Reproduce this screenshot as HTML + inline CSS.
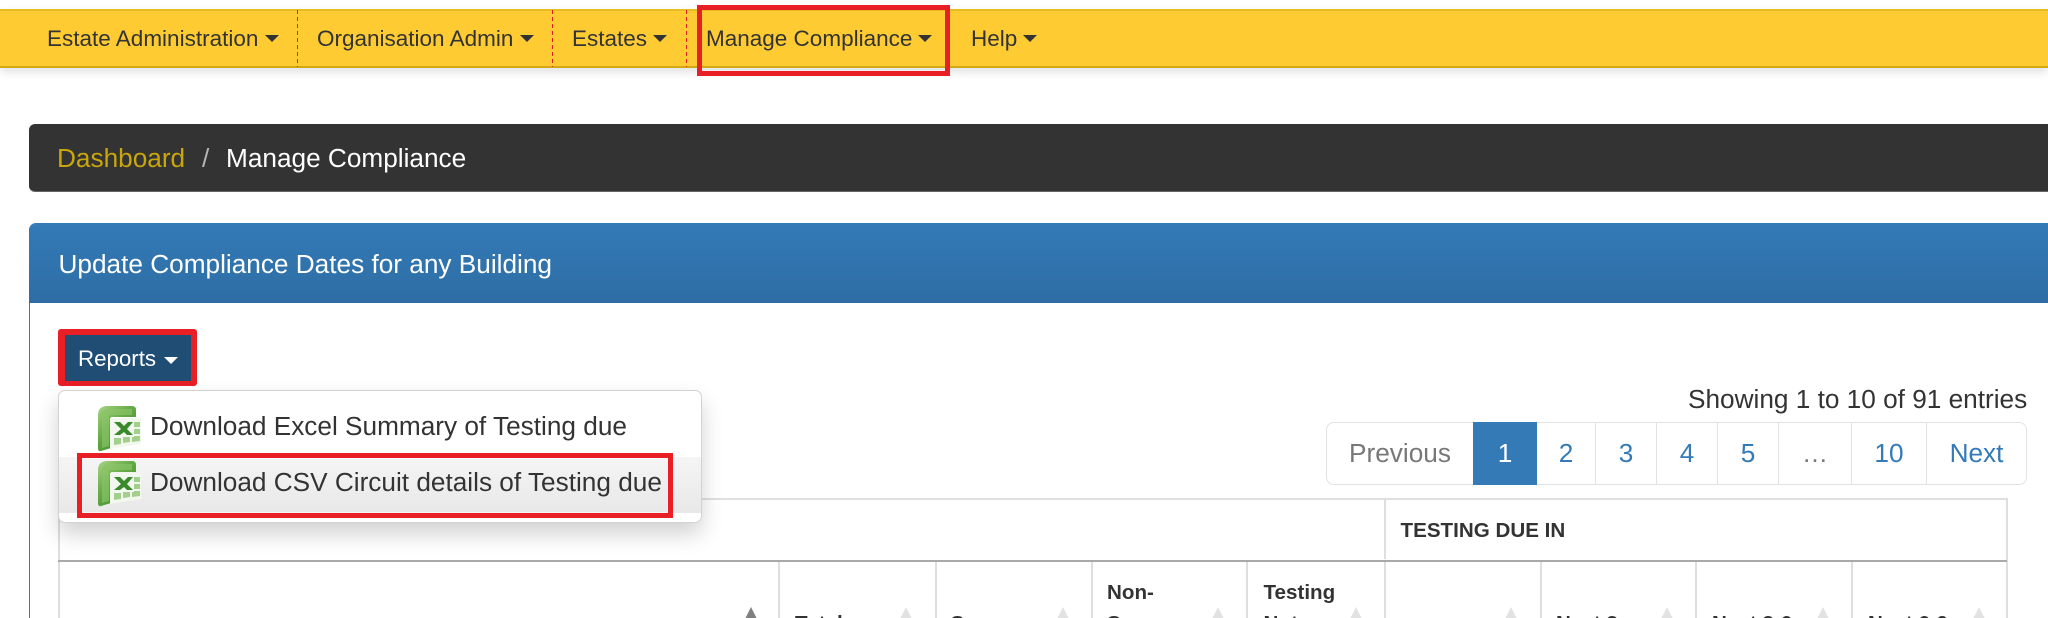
<!DOCTYPE html>
<html><head><meta charset="utf-8"><title>Manage Compliance</title>
<style>
html,body{margin:0;padding:0;background:#fff;overflow:hidden}
#s{position:relative;width:2048px;height:618px;overflow:hidden;background:#fff;font-family:"Liberation Sans",Arial,sans-serif;color:#333;filter:blur(.35px)}
#s div,#s span.t,#s svg{position:absolute}
.t{white-space:nowrap;font-size:26.2px;line-height:26.2px;height:26.2px}
.n{font-size:22.5px;line-height:22.5px;top:28px;height:22.5px;color:#333}
.c{width:0;height:0;border-left:7px solid transparent;border-right:7px solid transparent;border-top:7.5px solid #333;top:35px}
.sep{top:10px;height:57px;width:1px;background:repeating-linear-gradient(#e0201b 0 4px,transparent 4px 7px)}
.red{border:5.5px solid #e81f25;box-sizing:border-box}
.pg{top:422px;height:63px;font-size:26.2px;text-align:center;color:#337ab7;box-sizing:border-box;border-top:1.5px solid #e2e2e2;border-bottom:1.5px solid #e2e2e2;border-right:1.5px solid #e2e2e2;line-height:60px}
.v{width:1.5px;background:#dedede;top:562px;height:56px}
.h{font-weight:bold;font-size:20.6px;line-height:20.6px;height:20.6px;color:#333}
.a{width:0;height:0;border-left:11px solid transparent;border-right:11px solid transparent;border-bottom:22px solid #e2e2e2;top:607px}
</style></head><body><div id="s">

<!-- nav -->
<div style="left:0;top:9px;width:2048px;height:59px;background:#ffcb33;border-top:2px solid #e6bc22;border-bottom:2px solid #d2ab14;box-sizing:border-box;box-shadow:0 4px 9px rgba(0,0,0,.12)"></div>
<span class="t n" style="left:47px">Estate Administration</span><div class="c" style="left:265px"></div>
<div class="sep" style="left:297px"></div>
<span class="t n" style="left:317px">Organisation Admin</span><div class="c" style="left:520px"></div>
<div class="sep" style="left:552px"></div>
<span class="t n" style="left:572px">Estates</span><div class="c" style="left:653px"></div>
<div class="sep" style="left:686px"></div>
<span class="t n" style="left:706px">Manage Compliance</span><div class="c" style="left:918px"></div>
<span class="t n" style="left:971px">Help</span><div class="c" style="left:1023px"></div>
<div class="red" style="left:697px;top:5px;width:253px;height:71px"></div>

<!-- breadcrumb -->
<div style="left:29px;top:124px;width:2100px;height:68px;background:#333;border-radius:6px;border-bottom:1px solid #666;box-sizing:border-box"></div>
<span class="t" style="left:57px;top:145px;color:#c9a60b">Dashboard</span>
<span class="t" style="left:202px;top:145px;color:#b5b5b5">/</span>
<span class="t" style="left:226px;top:145px;color:#fff">Manage Compliance</span>

<!-- panel -->
<div style="left:29px;top:223px;width:2100px;height:500px;border:1.5px solid #337ab7;box-sizing:border-box;border-radius:7px"></div>
<div style="left:29px;top:224px;width:2100px;height:79px;background:linear-gradient(#337ab7,#2e6da4);border-radius:7px 7px 0 0"></div>
<span class="t" style="left:58.5px;top:251px;color:#fff">Update Compliance Dates for any Building</span>

<!-- table -->
<div style="left:59px;top:498px;width:1948px;height:1.5px;background:#e0e0e0"></div>
<div style="left:58px;top:498px;width:1.5px;height:120px;background:#dedede"></div>
<div style="left:2006px;top:498px;width:1.5px;height:120px;background:#dedede"></div>
<div style="left:58px;top:559.5px;width:1949px;height:2.5px;background:#a9a9a9"></div>
<div style="left:1384px;top:498px;width:1.5px;height:61px;background:#dedede"></div>
<div class="v" style="left:778px"></div><div class="v" style="left:935px"></div><div class="v" style="left:1091px"></div><div class="v" style="left:1246px"></div><div class="v" style="left:1384px"></div><div class="v" style="left:1540px"></div><div class="v" style="left:1695px"></div><div class="v" style="left:1851px"></div>
<span class="t h" style="left:1400.5px;top:520.5px">TESTING DUE IN</span>
<span class="t h" style="left:795px;top:613.5px">Total</span>
<span class="t h" style="left:950.5px;top:613.5px">Spare</span>
<span class="t h" style="left:1107px;top:583px">Non-</span>
<span class="t h" style="left:1107px;top:613.5px">Spare</span>
<span class="t h" style="left:1263.5px;top:583px">Testing</span>
<span class="t h" style="left:1263.5px;top:613.5px">Not</span>
<span class="t h" style="left:1556px;top:613.5px">Next 3</span>
<span class="t h" style="left:1712px;top:613.5px">Next 3-6</span>
<span class="t h" style="left:1868px;top:613.5px">Next 6-9</span>
<div class="a" style="left:740px;border-bottom-color:#808080"></div>
<div class="a" style="left:895px"></div><div class="a" style="left:1052px"></div><div class="a" style="left:1207px"></div><div class="a" style="left:1345px"></div><div class="a" style="left:1500px"></div><div class="a" style="left:1656px"></div><div class="a" style="left:1812px"></div><div class="a" style="left:1968px"></div>

<!-- showing + pagination -->
<span class="t" style="left:1688px;top:386px">Showing 1 to 10 of 91 entries</span>
<div class="pg" style="left:1326px;width:147px;border-left:1.5px solid #e2e2e2;border-right:0;border-radius:8px 0 0 8px;color:#777">Previous</div>
<div class="pg" style="left:1473px;width:64px;background:#337ab7;border-color:#337ab7;color:#fff;padding-left:1px">1</div>
<div class="pg" style="left:1537px;width:59px">2</div>
<div class="pg" style="left:1596px;width:61px">3</div>
<div class="pg" style="left:1657px;width:61px">4</div>
<div class="pg" style="left:1718px;width:61px">5</div>
<div class="pg" style="left:1779px;width:73px;color:#777">…</div>
<div class="pg" style="left:1852px;width:75px">10</div>
<div class="pg" style="left:1927px;width:100px;border-radius:0 8px 8px 0">Next</div>

<!-- reports button -->
<div style="left:58px;top:329px;width:139px;height:57px;background:#e81f25;border-radius:3px"></div>
<div style="left:65px;top:335px;width:126px;height:46px;background:#204d74"></div>
<span class="t" style="left:78px;top:347.5px;font-size:22.3px;line-height:22.3px;color:#fff">Reports</span>
<div class="c" style="left:164px;top:357px;border-top-color:#fff"></div>

<!-- dropdown -->
<div style="left:58px;top:390px;width:644px;height:133px;background:#fff;border:1.5px solid #d2d2d2;border-radius:7px;box-sizing:border-box;box-shadow:0 11px 22px rgba(0,0,0,.18)"></div>
<div style="left:59px;top:457px;width:642px;height:56px;background:linear-gradient(#f5f5f5,#e8e8e8)"></div>
<div class="red" style="left:77px;top:453px;width:596px;height:65px;box-shadow:inset 0 0 0 1px rgba(255,255,255,.5)"></div>
<svg style="left:97px;top:406px" width="45" height="46" viewBox="0 0 45 46">
<defs><linearGradient id="g" x1="0" y1="0" x2=".8" y2="1"><stop offset="0" stop-color="#a8d386"/><stop offset=".45" stop-color="#66ab46"/><stop offset="1" stop-color="#37832a"/></linearGradient></defs>
<path d="M9 0H35Q39 0 39 4V11H14V42L4 45Q1 46 1 42V9Q1 1 9 0Z" fill="url(#g)"/>
<path d="M9 3H35V9H12V40L5 42V10Q5 4 9 3Z" fill="#8cc46a" opacity=".65"/>
<path d="M13 12H44V38L13 43Z" fill="#f3f8ee"/>
<path d="M17 16H23L27 20L31 16H36L30 23L36 29H30L27 26L23 29H17L24 23Z" fill="#3a8a2c"/>
<path d="M37 16H43V21H37ZM37 23H43V28H37ZM37 30H43V34L37 35ZM17 32H24V38L17 39ZM26 31H33V36L26 37ZM35 31H43V35L35 36Z" fill="#a3cf8c"/>
</svg>
<span class="t" style="left:150px;top:413px">Download Excel Summary of Testing due</span>
<svg style="left:97px;top:461px" width="45" height="46" viewBox="0 0 45 46">
<path d="M9 0H35Q39 0 39 4V11H14V42L4 45Q1 46 1 42V9Q1 1 9 0Z" fill="url(#g)"/>
<path d="M9 3H35V9H12V40L5 42V10Q5 4 9 3Z" fill="#8cc46a" opacity=".65"/>
<path d="M13 12H44V38L13 43Z" fill="#f3f8ee"/>
<path d="M17 16H23L27 20L31 16H36L30 23L36 29H30L27 26L23 29H17L24 23Z" fill="#3a8a2c"/>
<path d="M37 16H43V21H37ZM37 23H43V28H37ZM37 30H43V34L37 35ZM17 32H24V38L17 39ZM26 31H33V36L26 37ZM35 31H43V35L35 36Z" fill="#a3cf8c"/>
</svg>
<span class="t" style="left:150px;top:469px">Download CSV Circuit details of Testing due</span>
</div></body></html>
